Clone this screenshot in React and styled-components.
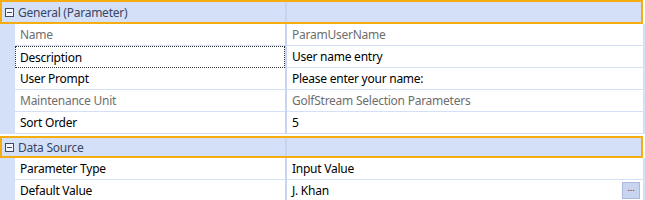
import React from 'react'
import styled, { createGlobalStyle } from 'styled-components'

const Global = createGlobalStyle`
body{
    margin:0;
    background:#ffffff;
    font-family:"Noto Sans","Open Sans",sans-serif;
}
`;

const sections = [
    {
        title: 'General (Parameter)',
        rows: [
            { name: 'Name', value: 'ParamUserName', readOnly: true },
            { name: 'Description', value: 'User name entry', focused: true },
            { name: 'User Prompt', value: 'Please enter your name:' },
            { name: 'Maintenance Unit', value: 'GolfStream Selection Parameters', readOnly: true },
            { name: 'Sort Order', value: '5' },
        ],
    },
    {
        title: 'Data Source',
        rows: [
            { name: 'Parameter Type', value: 'Input Value' },
            { name: 'Default Value', value: 'J. Khan', button: true },
        ],
    },
];

function CollapseBox() {
    return (
        <Box>
            <svg width="9" height="9" viewBox="0 0 9 9">
                <rect x="0.5" y="0.5" width="8" height="8" fill="#f4f6fb" stroke="#3c4a66" />
                <line x1="2" y1="4.5" x2="7" y2="4.5" stroke="#3c4a66" />
            </svg>
        </Box>
    )
}

function App() {
    return (
        <>
            <Global />
            <Grid>
                {sections.map((s, i) => (
                    <Section key={s.title} first={i === 0}>
                        <Category first={i === 0}>
                            <CollapseBox />
                            <CategoryTitle>{s.title}</CategoryTitle>
                            <CategoryDivider />
                        </Category>
                        {s.rows.map(r => (
                            <Row key={r.name}>
                                <Gutter />
                                <NameCell readOnly={r.readOnly} focused={r.focused}>{r.name}</NameCell>
                                <Divider />
                                <ValueCell readOnly={r.readOnly}>
                                    <span>{r.value}</span>
                                    {r.button && <DotsButton>...</DotsButton>}
                                </ValueCell>
                                <Edge />
                            </Row>
                        ))}
                    </Section>
                ))}
            </Grid>
        </>
    )
}

export default App

const Grid = styled.div`
width:645px;
height:200px;
overflow:hidden;
display:flex;
flex-direction:column;
font-size:12px;
letter-spacing:-0.25px;
`;

const Section = styled.div`
display:flex;
flex-direction:column;
margin-top:${props => props.first ? '0' : '2px'};
`;

const Category = styled.div`
height:${props => props.first ? '20px' : '18px'};
width:639px;
border:2px solid #f5ad12;
background:#d4e0f7;
display:flex;
align-items:center;
position:relative;
color:#3a4663;
`;

const Box = styled.div`
width:12px;
display:flex;
justify-content:center;
padding-left:1px;
`;

const CategoryTitle = styled.div`
padding-left:3px;
flex:1;
`;

const CategoryDivider = styled.div`
position:absolute;
left:283px;
top:0;
bottom:0;
width:2px;
background:#c9d5ee;
`;

const Row = styled.div`
height:22px;
display:flex;
`;

const Gutter = styled.div`
width:15px;
background:#d4e0f7;
`;

const NameCell = styled.div`
width:270px;
box-sizing:border-box;
padding-left:5px;
display:flex;
align-items:center;
color:${props => props.readOnly ? '#6e6e6e' : '#000'};
border:${props => props.focused ? '1px dotted #333' : 'none'};
${props => props.focused ? 'padding-left:4px;' : 'border-bottom:1px solid #d4e0f7;'}
`;

const Divider = styled.div`
width:2px;
background:#c9d5ee;
`;

const ValueCell = styled.div`
flex:1;
box-sizing:border-box;
padding-left:5px;
padding-right:3px;
display:flex;
align-items:center;
justify-content:space-between;
color:${props => props.readOnly ? '#6e6e6e' : '#000'};
border-bottom:1px solid #d4e0f7;
`;

const Edge = styled.div`
width:2px;
background:#d4e0f7;
`;

const DotsButton = styled.div`
width:18px;
height:17px;
box-sizing:border-box;
background:#c9d5f0;
border:1px solid #a9b9dd;
font-size:9px;
line-height:9px;
letter-spacing:0;
text-align:center;
color:#333;
`;
